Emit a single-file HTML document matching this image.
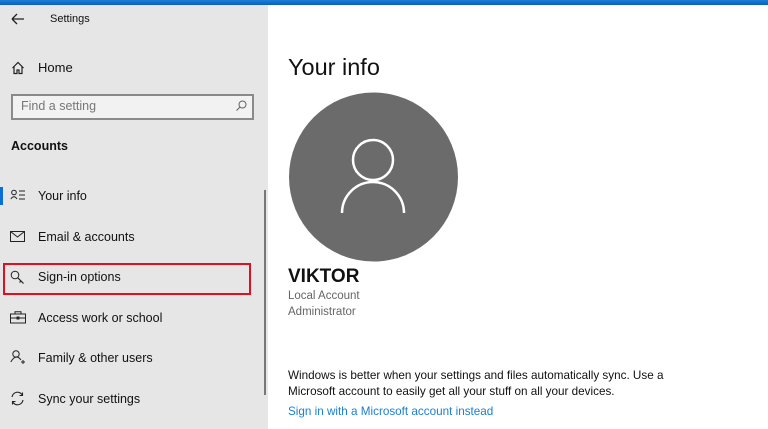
<!DOCTYPE html>
<html><head><style>
*{margin:0;padding:0;box-sizing:border-box}
body{width:768px;height:429px;overflow:hidden;background:#fff;font-family:"Liberation Sans",sans-serif;position:relative}
.bar{position:absolute;left:0;top:0;width:768px;height:5px;background:linear-gradient(#1d7fd6,#0a5fbf)}
.side{position:absolute;left:0;top:5px;width:268px;height:424px;background:#e6e6e6}
.t{position:absolute;white-space:nowrap;color:#111}
.ic{position:absolute}
</style></head><body>
<div class="bar"></div>
<div class="side"></div>
<svg class="ic" style="left:10px;top:12px" width="16" height="14"><path d="M2 7H14M2 7L7 2M2 7L7 12" stroke="#222" stroke-width="1.3" fill="none"/></svg>
<div class="t" style="left:50px;top:13px;font-size:11px">Settings</div>
<svg class="ic" style="left:11px;top:61px" width="14" height="14"><path d="M1.5 7L7 1.5L12.5 7M3 5.5V12.5H6V9H8V12.5H11V5.5" stroke="#222" stroke-width="1.2" fill="none"/></svg>
<div class="t" style="left:38px;top:60px;font-size:13px">Home</div>
<div style="position:absolute;left:11px;top:94px;width:243px;height:26px;border:2px solid #8a8a8a;background:#f2f2f2"></div>
<div class="t" style="left:21px;top:99px;font-size:12.5px;color:#777">Find a setting</div>
<svg class="ic" style="left:235px;top:100px" width="12" height="12"><circle cx="7.5" cy="4.5" r="3.5" stroke="#666" stroke-width="1" fill="none"/><path d="M5 7L1.5 10.5" stroke="#666" stroke-width="1.1"/></svg>
<div class="t" style="left:11px;top:139px;font-size:12.5px;font-weight:bold">Accounts</div>
<div style="position:absolute;left:0;top:187px;width:3px;height:18px;background:#0a6fd6"></div>
<svg class="ic" style="left:10px;top:189px" width="16" height="12"><circle cx="4" cy="3.5" r="2.3" stroke="#222" fill="none"/><path d="M0.8 10Q4 5.5 7 10M9 2H15M9 6H15M9 10H15" stroke="#222" fill="none"/></svg>
<div class="t" style="left:38px;top:189px;font-size:12.5px">Your info</div>
<svg class="ic" style="left:10px;top:231px" width="15" height="11"><rect x="0.5" y="0.5" width="14" height="10" stroke="#222" fill="none"/><path d="M0.5 0.5L7.5 6L14.5 0.5" stroke="#222" fill="none"/></svg>
<div class="t" style="left:38px;top:230px;font-size:12.5px">Email &amp; accounts</div>
<div style="position:absolute;left:3px;top:263px;width:248px;height:32px;border:2px solid #e01020"></div>
<svg class="ic" style="left:10px;top:270px" width="15" height="15"><circle cx="5" cy="5" r="3.8" stroke="#222" fill="none"/><path d="M7.8 7.8L13.5 13.5M11 11L9.5 12.5" stroke="#222" stroke-width="1.2" fill="none"/></svg>
<div class="t" style="left:38px;top:270px;font-size:12.5px">Sign-in options</div>
<svg class="ic" style="left:10px;top:311px" width="16" height="13"><rect x="0.5" y="3" width="15" height="9" stroke="#222" fill="none"/><path d="M5 3V0.8H11V3M0.5 7H15.5M7 6H9V8H7Z" stroke="#222" fill="none"/></svg>
<div class="t" style="left:38px;top:311px;font-size:12.5px">Access work or school</div>
<svg class="ic" style="left:10px;top:350px" width="16" height="15"><circle cx="6" cy="4" r="3.2" stroke="#222" fill="none"/><path d="M0.8 12Q6 3 11 10M11 12H15M13 10V14" stroke="#222" fill="none"/></svg>
<div class="t" style="left:38px;top:351px;font-size:12.5px">Family &amp; other users</div>
<svg class="ic" style="left:10px;top:391px" width="15" height="15"><path d="M2 6A5.5 5.5 0 0 1 12.5 4.5M13 9A5.5 5.5 0 0 1 2.5 10.5M12.5 1.5V4.5H9.5M2.5 13.5V10.5H5.5" stroke="#222" stroke-width="1.1" fill="none"/></svg>
<div class="t" style="left:38px;top:392px;font-size:12.5px">Sync your settings</div>
<div style="position:absolute;left:264px;top:190px;width:2px;height:205px;background:#777"></div>
<div class="t" style="left:288px;top:54px;font-size:23.5px;color:#111">Your info</div>
<svg class="ic" style="left:288px;top:92px" width="172" height="172"><circle cx="85.5" cy="85" r="84.5" fill="#6b6b6b"/><circle cx="85" cy="68" r="20" stroke="#fff" stroke-width="2.5" fill="none"/><path d="M54 121A31 31 0 0 1 116 121" stroke="#fff" stroke-width="2.5" fill="none"/></svg>
<div class="t" style="left:288px;top:266px;font-size:19px;font-weight:bold">VIKTOR</div>
<div class="t" style="left:288px;top:290px;font-size:11.5px;color:#666">Local Account</div>
<div class="t" style="left:288px;top:306px;font-size:11.5px;color:#666">Administrator</div>
<div class="t" style="left:288px;top:368px;font-size:11.7px;line-height:16px">Windows is better when your settings and files automatically sync. Use a<br>Microsoft account to easily get all your stuff on all your devices.</div>
<div class="t" style="left:288px;top:405px;font-size:11.7px;color:#1a7fd4">Sign in with a Microsoft account instead</div>
</body></html>
